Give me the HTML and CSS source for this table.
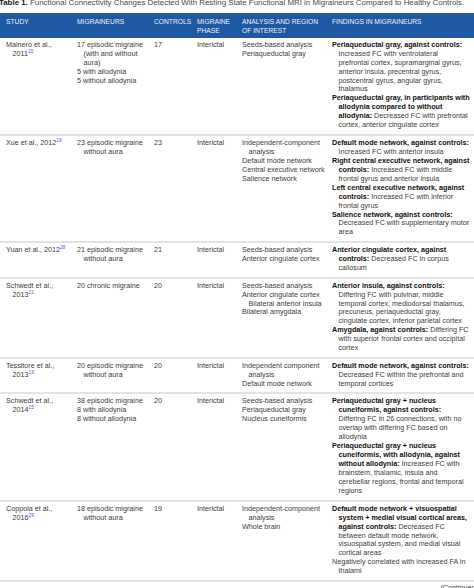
FILE: index.html
```html
<!DOCTYPE html>
<html lang="en">
<head>
<meta charset="utf-8">
<title>Table 1</title>
<link rel="stylesheet" href="styles.css">
</head>
<body>
<div class="page">
  <p class="caption"><b>Table 1.</b> Functional Connectivity Changes Detected With Resting State Functional MRI in Migraineurs Compared to Healthy Controls.</p>
  <table class="fc-table">
    <colgroup>
      <col class="c-study">
      <col class="c-mig">
      <col class="c-ctrl">
      <col class="c-phase">
      <col class="c-anal">
      <col class="c-find">
    </colgroup>
    <thead>
      <tr>
        <th>Study</th>
        <th>Migraineurs</th>
        <th>Controls</th>
        <th>Migraine<br>phase</th>
        <th>Analysis and region<br>of interest</th>
        <th>Findings in migraineurs</th>
      </tr>
    </thead>
    <tbody>
      <tr>
        <td><p>Mainero et al.,<br>2011<sup>20</sup></p></td>
        <td><p>17 episodic migraine<br>(with and without<br>aura)</p><p>5 with allodynia</p><p>5 without allodynia</p></td>
        <td><p>17</p></td>
        <td><p>Interictal</p></td>
        <td><p>Seeds-based analysis</p><p>Periaqueductal gray</p></td>
        <td>
          <p><b>Periaqueductal gray, against controls:</b><br>Increased FC with ventrolateral<br>prefrontal cortex, supramarginal gyrus,<br>anterior insula, precentral gyrus,<br>postcentral gyrus, angular gyrus,<br>thalamus</p>
          <p><b>Periaqueductal gray, in participants with<br>allodynia compared to without<br>allodynia:</b> Decreased FC with prefrontal<br>cortex, anterior cingulate cortex</p>
        </td>
      </tr>
      <tr>
        <td><p>Xue et al., 2012<sup>18</sup></p></td>
        <td><p>23 episodic migraine<br>without aura</p></td>
        <td><p>23</p></td>
        <td><p>Interictal</p></td>
        <td><p>Independent-component<br>analysis</p><p>Default mode network</p><p>Central executive network</p><p>Salience network</p></td>
        <td>
          <p><b>Default mode network, against controls:</b><br>Increased FC with anterior insula</p>
          <p><b>Right central executive network, against<br>controls:</b> Increased FC with middle<br>frontal gyrus and anterior insula</p>
          <p><b>Left central executive network, against<br>controls:</b> Increased FC with inferior<br>frontal gyrus</p>
          <p><b>Salience network, against controls:</b><br>Decreased FC with supplementary motor<br>area</p>
        </td>
      </tr>
      <tr>
        <td><p>Yuan et al., 2012<sup>28</sup></p></td>
        <td><p>21 episodic migraine<br>without aura</p></td>
        <td><p>21</p></td>
        <td><p>Interictal</p></td>
        <td><p>Seeds-based analysis</p><p>Anterior cingulate cortex</p></td>
        <td>
          <p><b>Anterior cingulate cortex, against<br>controls:</b> Decreased FC in corpus<br>callosum</p>
        </td>
      </tr>
      <tr>
        <td><p>Schwedt et al.,<br>2013<sup>21</sup></p></td>
        <td><p>20 chronic migraine</p></td>
        <td><p>20</p></td>
        <td><p>Interictal</p></td>
        <td><p>Seeds-based analysis</p><p>Anterior cingulate cortex<br>Bilateral anterior insula</p><p>Bilateral amygdala</p></td>
        <td>
          <p><b>Anterior insula, against controls:</b><br>Differing FC with pulvinar, middle<br>temporal cortex, mediodorsal thalamus,<br>precuneus, periaqueductal gray,<br>cingulate cortex, inferior parietal cortex</p>
          <p><b>Amygdala, against controls:</b> Differing FC<br>with superior frontal cortex and occipital<br>cortex</p>
        </td>
      </tr>
      <tr>
        <td><p>Tessitore et al.,<br>2013<sup>19</sup></p></td>
        <td><p>20 episodic migraine<br>without aura</p></td>
        <td><p>20</p></td>
        <td><p>Interictal</p></td>
        <td><p>Independent component<br>analysis</p><p>Default mode network</p></td>
        <td>
          <p><b>Default mode network, against controls:</b><br>Decreased FC within the prefrontal and<br>temporal cortices</p>
        </td>
      </tr>
      <tr>
        <td><p>Schwedt et al.,<br>2014<sup>25</sup></p></td>
        <td><p>38 episodic migraine</p><p>8 with allodynia</p><p>8 without allodynia</p></td>
        <td><p>20</p></td>
        <td><p>Interictal</p></td>
        <td><p>Seeds-based analysis</p><p>Periaqueductal gray</p><p>Nucleus cuneiformis</p></td>
        <td>
          <p><b>Periaqueductal gray + nucleus<br>cuneiformis, against controls:</b><br>Differing FC in 26 connections, with no<br>overlap with differing FC based on<br>allodynia</p>
          <p><b>Periaqueductal gray + nucleus<br>cuneiformis, with allodynia, against<br>without allodynia:</b> Increased FC with<br>brainstem, thalamic, insula and<br>cerebellar regions, frontal and temporal<br>regions</p>
        </td>
      </tr>
      <tr>
        <td><p>Coppola et al.,<br>2016<sup>29</sup></p></td>
        <td><p>18 episodic migraine<br>without aura</p></td>
        <td><p>19</p></td>
        <td><p>Interictal</p></td>
        <td><p>Independent-component<br>analysis</p><p>Whole brain</p></td>
        <td>
          <p><b>Default mode network + visuospatial<br>system + medial visual cortical areas,<br>against controls:</b> Decreased FC<br>between default mode network,<br>visuospatial system, and medial visual<br>cortical areas</p>
          <p>Negatively correlated with increased FA in<br>thalami</p>
        </td>
      </tr>
    </tbody>
  </table>
  <p class="continued">(Continued)</p>
</div>
</body>
</html>
```

FILE: styles.css
```css
html, body {
  margin: 0;
  padding: 0;
  background: #ffffff;
}

body {
  width: 474px;
  height: 588px;
  overflow: hidden;
  font-family: "Liberation Sans", Arial, sans-serif;
  color: #3c3c3c;
}

.page {
  width: 478px;
}

.caption {
  margin: -2px 0 5.7px -1px;
  font-size: 7.9px;
  line-height: 9px;
  white-space: nowrap;
  color: #4a4a4a;
}

.caption b {
  color: #1a1a1a;
}

.fc-table {
  width: 478px;
  table-layout: fixed;
  border-collapse: separate;
  border-spacing: 0;
}

.c-study { width: 71px; }
.c-mig { width: 77px; }
.c-ctrl { width: 43px; }
.c-phase { width: 45px; }
.c-anal { width: 90px; }
.c-find { width: 152px; }

.fc-table th {
  background: #1f58a3;
  color: #eef2fa;
  font-weight: normal;
  font-size: 6.7px;
  line-height: 9px;
  text-transform: uppercase;
  text-align: left;
  vertical-align: top;
  padding: 4px 0 3px 6px;
  white-space: nowrap;
}

.fc-table td {
  vertical-align: top;
  padding: 3px 0 3.7px 6px;
  border-bottom: 2px solid #e3e3e3;
  font-size: 7.2px;
  line-height: 8.95px;
  white-space: nowrap;
}

.fc-table td p {
  margin: 0;
  padding-left: 6.5px;
  text-indent: -6.5px;
}

.fc-table td b {
  color: #111111;
  font-weight: bold;
}

.fc-table sup {
  font-size: 4.8px;
  line-height: 0;
  vertical-align: 3px;
  color: #4b5fd6;
}

.continued {
  margin: 1px 0 0;
  text-align: right;
  font-size: 7.2px;
  line-height: 9px;
  color: #3c3c3c;
}
```
